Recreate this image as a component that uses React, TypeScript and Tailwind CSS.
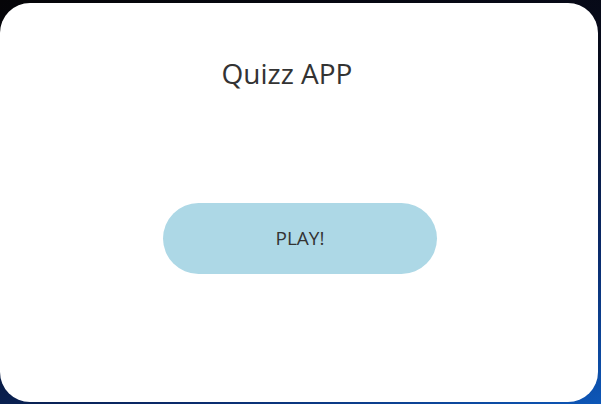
export default function App() {
  return (
    <div className="w-[601px] h-[404px] overflow-hidden bg-[linear-gradient(160deg,#050508_0%,#070b1c_45%,#0a2a6a_75%,#0d57b8_100%)] pt-[3px] pr-[3px] pb-[2px]">
      <div className="h-full w-full bg-white rounded-[30px] flex flex-col items-center" style={{ fontFamily: '"Open Sans", "Noto Sans", sans-serif' }}>
        <h1 className="mt-[50px] text-[28px] leading-[40px] text-[#333333] pr-[24px]">Quizz APP</h1>
        <button className="mt-[110px] ml-[2px] w-[274px] h-[71px] rounded-full bg-[#add8e6] text-[19px] text-[#333333]">PLAY!</button>
      </div>
    </div>
  );
}
